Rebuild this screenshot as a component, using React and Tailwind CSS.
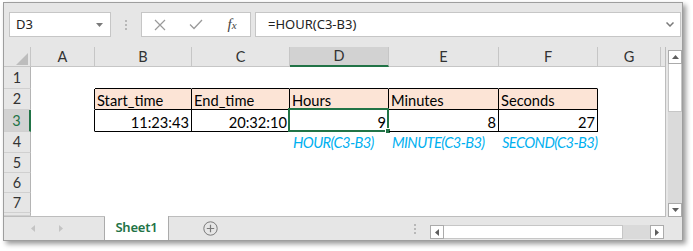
import React from "react";

const cellFont = { fontFamily: "Lato, 'Liberation Sans', sans-serif" };
const uiFont = { fontFamily: "'Noto Sans', 'Open Sans', sans-serif" };

const columns = [
  { key: "A", w: "w-[64px]" },
  { key: "B", w: "w-[97px]" },
  { key: "C", w: "w-[98px]" },
  { key: "D", w: "w-[99px]", selected: true },
  { key: "E", w: "w-[110px]" },
  { key: "F", w: "w-[99px]" },
  { key: "G", w: "w-[63px]" },
  { key: "", w: "w-[4px]", last: true },
];

const rows = [
  { n: "1", h: "h-[22px]" },
  { n: "2", h: "h-[21px]" },
  { n: "3", h: "h-[22px]", selected: true },
  { n: "4", h: "h-[21px]" },
  { n: "5", h: "h-[20px]" },
  { n: "6", h: "h-[20px]" },
  { n: "7", h: "h-[20px]" },
  { n: "", h: "h-[3px]" },
];

const cells = {
  2: { B: "Start_time", C: "End_time", D: "Hours", E: "Minutes", F: "Seconds" },
  3: { B: "11:23:43", C: "20:32:10", D: "9", E: "8", F: "27" },
  4: { D: "HOUR(C3-B3)", E: "MINUTE(C3-B3)", F: "SECOND(C3-B3)" },
};

const tableCols = ["B", "C", "D", "E", "F"];

function FormulaBar() {
  return (
    <div className="h-[44px] flex items-start pt-[9px] pl-[5px]" style={uiFont}>
      <div className="w-[102px] h-[25px] bg-white border border-[#c6c6c6] flex items-center justify-between pl-[6px] pr-[7px]">
        <span className="text-[13px] text-[#222]">D3</span>
        <svg width="7" height="4" viewBox="0 0 7 4">
          <polygon points="0,0 7,0 3.5,4" fill="#7a7a7a" />
        </svg>
      </div>
      <div className="w-[30px] h-[25px] flex flex-col items-center justify-center gap-[2px]">
        <span className="w-[2px] h-[2px] bg-[#b8b8b8]" />
        <span className="w-[2px] h-[2px] bg-[#b8b8b8]" />
        <span className="w-[2px] h-[2px] bg-[#b8b8b8]" />
      </div>
      <div className="w-[110px] h-[25px] bg-white border border-[#c6c6c6] flex items-center">
        <div className="w-[36px] flex justify-center">
          <svg width="12" height="12" viewBox="0 0 12 12">
            <path d="M1 1 L11 11 M11 1 L1 11" stroke="#9a9a9a" strokeWidth="1.2" fill="none" />
          </svg>
        </div>
        <div className="w-[36px] flex justify-center">
          <svg width="14" height="11" viewBox="0 0 14 11">
            <path d="M1 5.5 L5 9.5 L13 1" stroke="#9a9a9a" strokeWidth="1.3" fill="none" />
          </svg>
        </div>
        <div className="w-[36px] flex justify-center">
          <span
            className="italic text-[15px] text-[#444] leading-none"
            style={{ fontFamily: "'Liberation Serif', serif" }}
          >
            f<span className="text-[11px]">x</span>
          </span>
        </div>
      </div>
      <div className="ml-[4px] w-[426px] h-[25px] bg-white border border-[#c6c6c6] flex items-center justify-between pl-[12px] pr-[6px]">
        <span className="text-[13px] text-[#222]">=HOUR(C3-B3)</span>
        <svg width="8" height="5" viewBox="0 0 8 5">
          <path d="M0.5 0.5 L4 4 L7.5 0.5" stroke="#7a7a7a" strokeWidth="1.5" fill="none" />
        </svg>
      </div>
    </div>
  );
}

function cellBorders(rowNum, colKey) {
  const inTable = tableCols.includes(colKey);
  let r = "border-r-transparent";
  let b = "border-b-transparent";
  if ((rowNum === "2" || rowNum === "3") && (inTable || colKey === "A")) r = "border-r-black";
  if ((rowNum === "1" || rowNum === "2" || rowNum === "3") && inTable) b = "border-b-black";
  return r + " " + b;
}

function Sheet() {
  return (
    <div className="w-[662px] bg-white border-r border-b border-[#bdbdbd] flex flex-col" style={cellFont}>
      <div className="flex h-[20px] bg-[#e6e6e6] text-[14.5px] text-[#333]">
        <div className="w-[27px] h-full border-r border-b border-[#c6c6c6] flex items-end justify-end">
          <svg width="14" height="14" viewBox="0 0 14 14">
            <polygon points="12,1 12,13 0,13" fill="#bdbdbd" />
          </svg>
        </div>
        {columns.map((c) => (
          <div
            key={c.key + c.w}
            className={
              c.w +
              " h-full flex items-center justify-center leading-[20px] " +
              (c.last ? "" : "border-r border-r-[#c6c6c6] ") +
              (c.selected
                ? "bg-[#d2d2d2] border-b-2 border-b-[#217346]"
                : "border-b border-b-[#c6c6c6]")
            }
          >
            {c.key}
          </div>
        ))}
      </div>
      {rows.map((r) => (
        <div key={r.n + r.h} className={"flex " + r.h}>
          <div
            className={
              "w-[27px] h-full flex items-center justify-center text-[14.5px] border-b border-b-[#d0d0d0] overflow-hidden " +
              (r.selected
                ? "bg-[#d2d2d2] text-[#217346] border-r-2 border-r-[#217346]"
                : "bg-[#e6e6e6] text-[#333] border-r border-r-[#b4b4b4]")
            }
          >
            {r.n}
          </div>
          {columns.map((c) => {
            const value = cells[r.n] && cells[r.n][c.key];
            const isHeader = r.n === "2" && tableCols.includes(c.key);
            const isNumber = r.n === "3";
            const isNote = r.n === "4";
            return (
              <div
                key={c.key + c.w}
                className={
                  c.w +
                  " h-full relative flex items-end border-r border-b text-[14.67px] leading-[17px] " +
                  cellBorders(r.n, c.key) +
                  (isHeader ? " bg-[#fce4d6]" : "") +
                  (isNumber ? " justify-end pr-[2px]" : " pl-[2px]") +
                  (isNote
                    ? " italic text-[#00b0f0] pb-[1px] pl-[3px] tracking-[-0.6px]"
                    : " text-black")
                }
              >
                {value && <span className="whitespace-nowrap">{value}</span>}
                {r.selected && c.selected && (
                  <>
                    <div className="absolute -left-[2px] -top-[2px] -right-[1px] -bottom-[1px] border-2 border-[#217346]" />
                    <div className="absolute -right-[3px] -bottom-[3px] w-[6px] h-[6px] bg-[#217346] border border-white" />
                  </>
                )}
              </div>
            );
          })}
        </div>
      ))}
    </div>
  );
}

function ArrowBtn({ dir, className = "" }) {
  const pts = {
    up: "0,4 7,4 3.5,0",
    down: "0,0 7,0 3.5,4",
    left: "4,0 4,7 0,3.5",
    right: "0,0 0,7 4,3.5",
  }[dir];
  const vertical = dir === "up" || dir === "down";
  return (
    <div className={"w-[14px] h-[14px] bg-white border border-[#ababab] flex items-center justify-center " + className}>
      <svg width={vertical ? 7 : 4} height={vertical ? 4 : 7} viewBox={vertical ? "0 0 7 4" : "0 0 4 7"}>
        <polygon points={pts} fill="#5e5e5e" />
      </svg>
    </div>
  );
}

function VScroll() {
  return (
    <div className="w-[16px] flex flex-col pt-[3px] pl-[2px]">
      <ArrowBtn dir="up" />
      <div className="w-[14px] h-[48px] bg-white border-x border-b border-[#c6c6c6]" />
      <div className="w-[14px] flex-1 bg-[#dadada]" />
      <ArrowBtn dir="down" />
    </div>
  );
}

function TabBar() {
  return (
    <div className="h-[23px] flex items-center" style={uiFont}>
      <div className="w-[101px] h-full border-r border-[#ababab] flex items-center">
        <svg className="ml-[27px]" width="4" height="7" viewBox="0 0 4 7">
          <polygon points="4,0 4,7 0,3.5" fill="#c4c4c4" />
        </svg>
        <svg className="ml-[24px]" width="4" height="7" viewBox="0 0 4 7">
          <polygon points="0,0 0,7 4,3.5" fill="#c4c4c4" />
        </svg>
      </div>
      <div className="w-[64px] h-[24px] -mt-px self-start bg-white border-r border-[#ababab] flex items-center justify-center">
        <span className="text-[13px] font-semibold text-[#217346] tracking-[-0.2px]">Sheet1</span>
      </div>
      <svg className="ml-[34px]" width="15" height="15" viewBox="0 0 15 15">
        <circle cx="7.5" cy="7.5" r="6.7" stroke="#7a7a7a" strokeWidth="1" fill="none" />
        <path d="M7.5 3.8 V11.2 M3.8 7.5 H11.2" stroke="#7a7a7a" strokeWidth="1.2" />
      </svg>
      <div className="ml-[195px] w-[3px] flex flex-col items-center gap-[2px]">
        <span className="w-[2px] h-[2px] bg-[#b8b8b8]" />
        <span className="w-[2px] h-[2px] bg-[#b8b8b8]" />
        <span className="w-[2px] h-[2px] bg-[#b8b8b8]" />
      </div>
      <div className="ml-[14px] self-end mb-[1px] flex">
        <ArrowBtn dir="left" />
        <div className="w-[179px] h-[14px] bg-white border-y border-r border-[#c6c6c6]" />
        <div className="w-[27px] h-[14px] bg-[#dadada]" />
        <ArrowBtn dir="right" />
      </div>
    </div>
  );
}

export default function App() {
  return (
    <div className="w-[693px] h-[251px] bg-white pl-[3px] pt-[2px]">
      <div className="w-[680px] border border-[#9e9e9e] bg-[#e6e6e6] shadow-[3px_3px_5px_rgba(0,0,0,0.4)] flex flex-col">
        <FormulaBar />
        <div className="flex h-[170px]">
          <Sheet />
          <VScroll />
        </div>
        <TabBar />
      </div>
    </div>
  );
}
